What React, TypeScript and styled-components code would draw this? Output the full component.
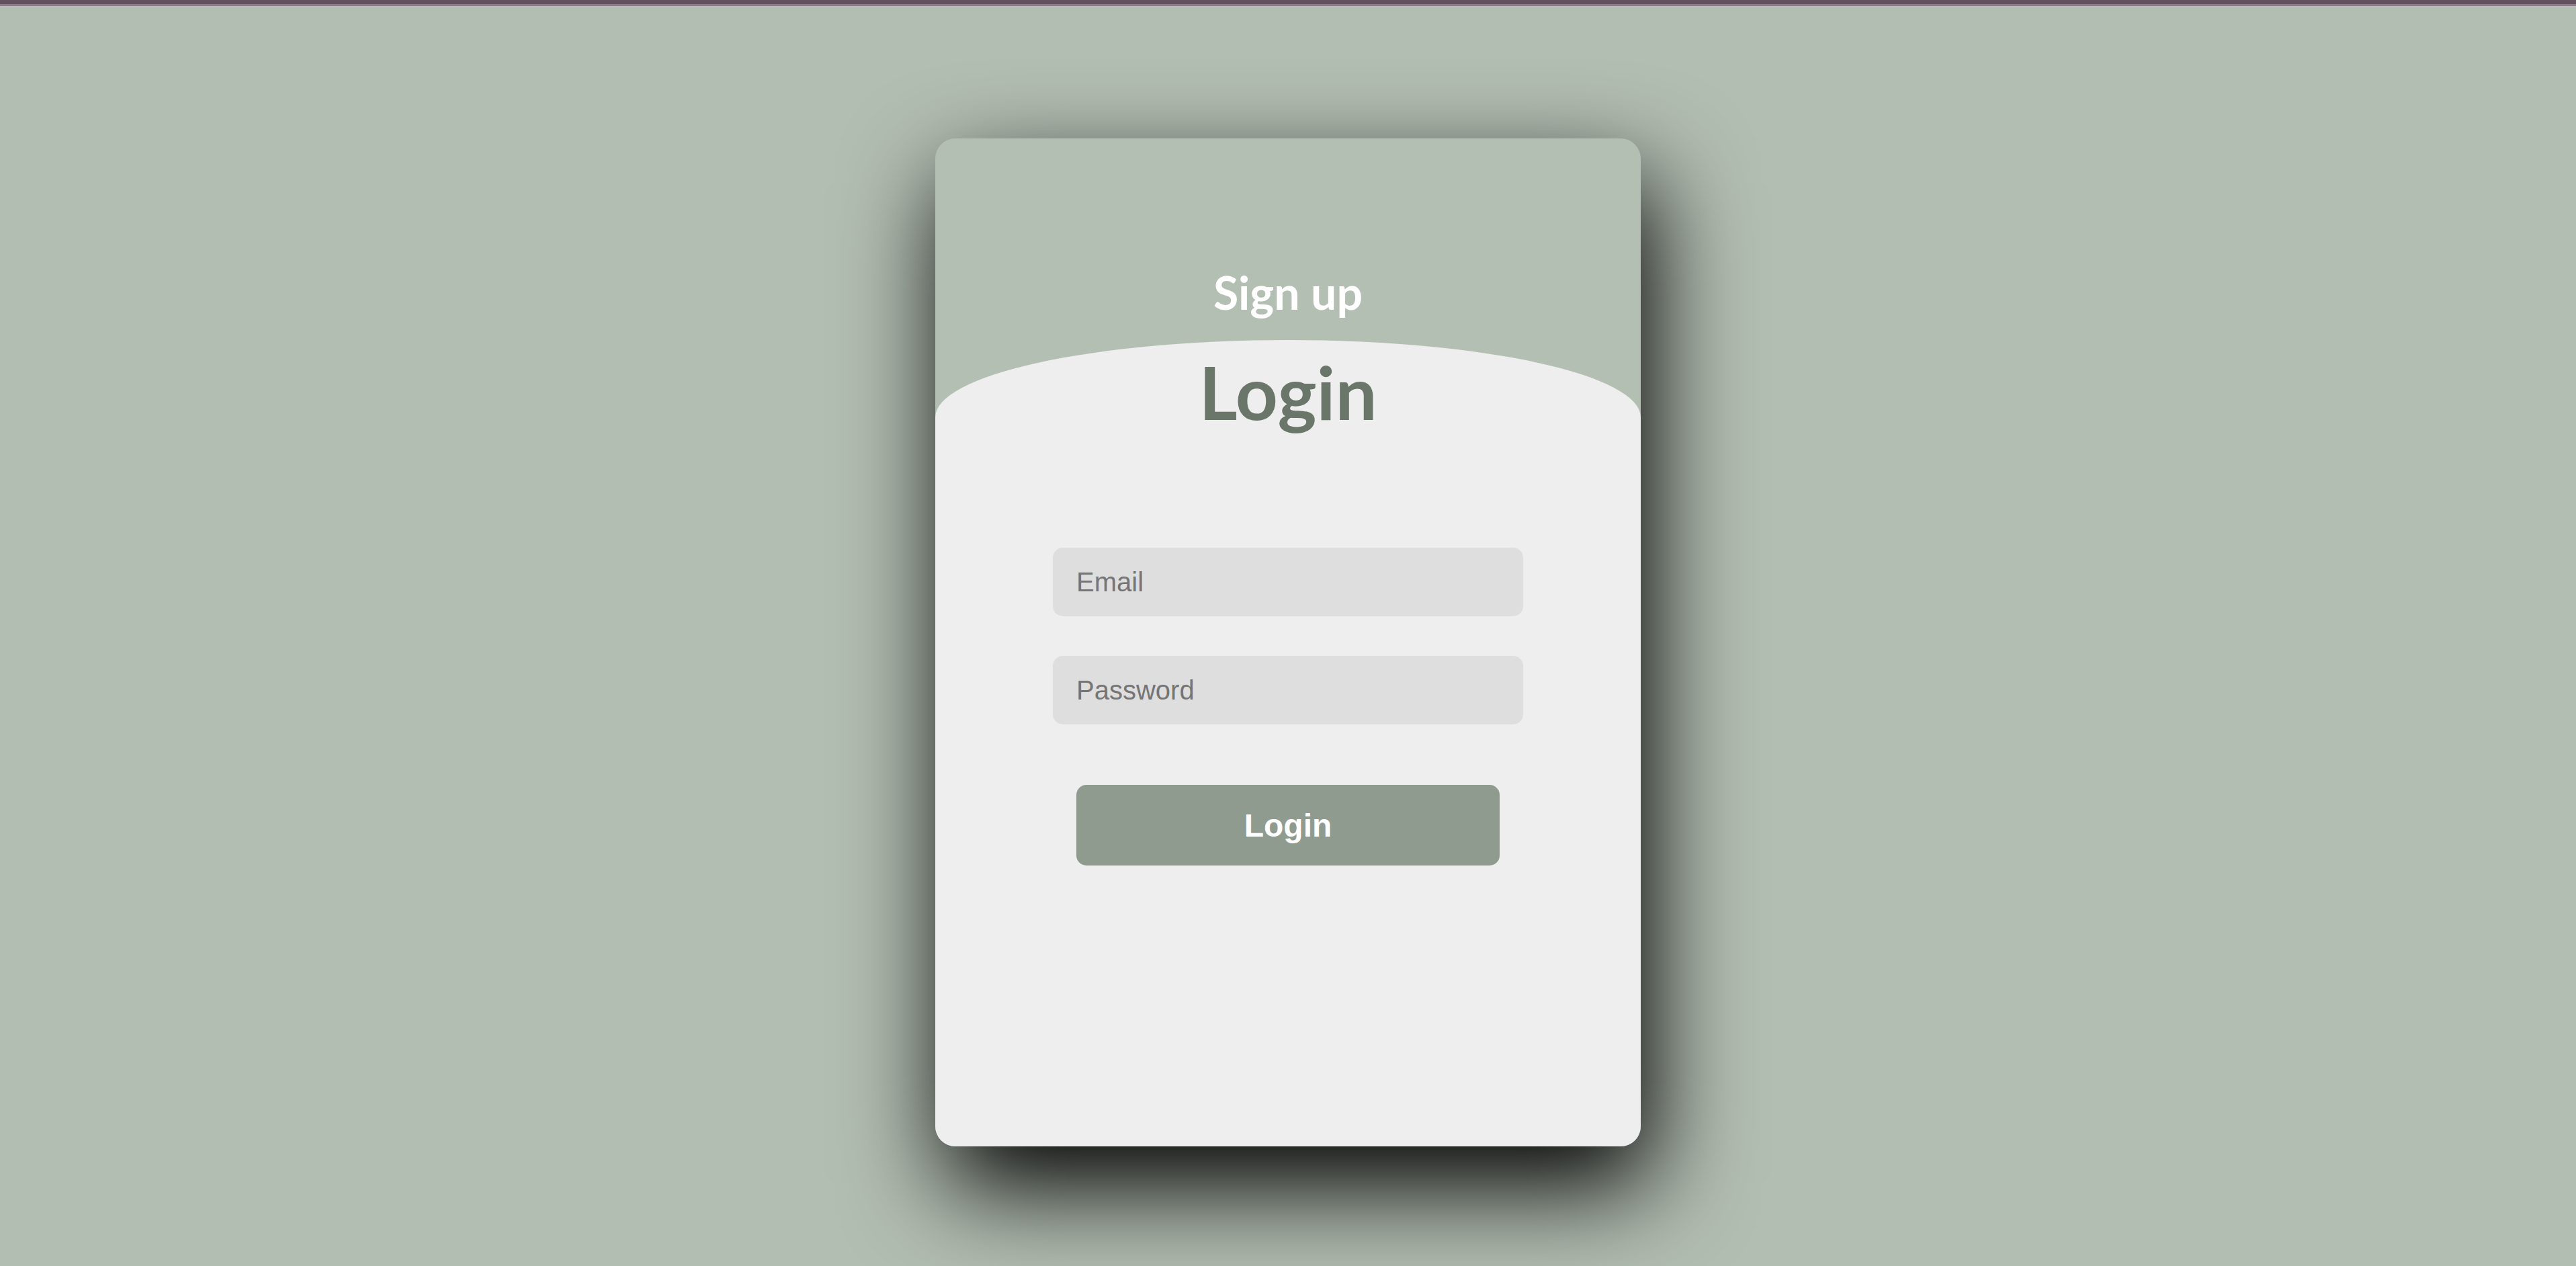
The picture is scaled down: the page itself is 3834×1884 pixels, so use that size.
import styled, { createGlobalStyle } from "styled-components";

const GlobalStyle = createGlobalStyle`
  html, body {
    margin: 0;
    padding: 0;
    background: #b3beb2;
    font-family: "Liberation Sans", Arial, sans-serif;
  }
`;

const Page = styled.div`
  min-height: 1884px;
  background: #b3beb2;
  display: flex;
  flex-direction: column;
  align-items: center;
  overflow: hidden;
`;

const TopStrip = styled.div`
  align-self: stretch;
  height: 6px;
  background: #64535f;
  border-bottom: 3px solid #8a7b86;
`;

const Card = styled.div`
  margin-top: 197px;
  width: 1050px;
  height: 1500px;
  border-radius: 30px;
  overflow: hidden;
  background: #b4bfb3;
  box-shadow: 15px 60px 150px #000;
  display: flex;
  flex-direction: column;
`;

const SignupArea = styled.div`
  height: 300px;
  flex-shrink: 0;
  display: flex;
  justify-content: center;
`;

const Heading = styled.div<{ $size: number; $color: string; $top: number }>`
  font-family: Lato, "Noto Sans", sans-serif;
  font-weight: 700;
  font-size: ${(p) => p.$size}px;
  line-height: 1;
  color: ${(p) => p.$color};
  padding-top: ${(p) => p.$top}px;
  text-align: center;
`;

const LoginPanel = styled.div`
  height: 1380px;
  flex-shrink: 0;
  background: #eeeeee;
  border-radius: 60% / 10%;
  display: flex;
  flex-direction: column;
  align-items: center;
`;

const Form = styled.form`
  margin-top: 178px;
  display: flex;
  flex-direction: column;
  align-items: center;
  gap: 59px;
`;

const Field = styled.input`
  box-sizing: border-box;
  width: 700px;
  height: 102px;
  padding: 0 35px;
  border: none;
  outline: none;
  border-radius: 15px;
  background: #dedede;
  font-family: "Liberation Sans", Arial, sans-serif;
  font-size: 40px;
  color: #333;

  &::placeholder {
    color: #757575;
  }
`;

const SubmitButton = styled.button`
  width: 630px;
  height: 120px;
  margin-top: 31px;
  border: none;
  outline: none;
  border-radius: 15px;
  background: #909b8f;
  color: #fff;
  font-family: "Liberation Sans", Arial, sans-serif;
  font-size: 48px;
  font-weight: bold;
  cursor: pointer;
`;

export default function App() {
  return (
    <Page>
      <GlobalStyle />
      <TopStrip />
      <Card>
        <SignupArea>
          <Heading $size={68} $color="#ffffff" $top={195}>
            Sign up
          </Heading>
        </SignupArea>
        <LoginPanel>
          <Heading $size={110} $color="#6b766b" $top={21}>
            Login
          </Heading>
          <Form onSubmit={(e) => e.preventDefault()}>
            <Field type="email" placeholder="Email" />
            <Field type="password" placeholder="Password" />
            <SubmitButton type="submit">Login</SubmitButton>
          </Form>
        </LoginPanel>
      </Card>
    </Page>
  );
}
